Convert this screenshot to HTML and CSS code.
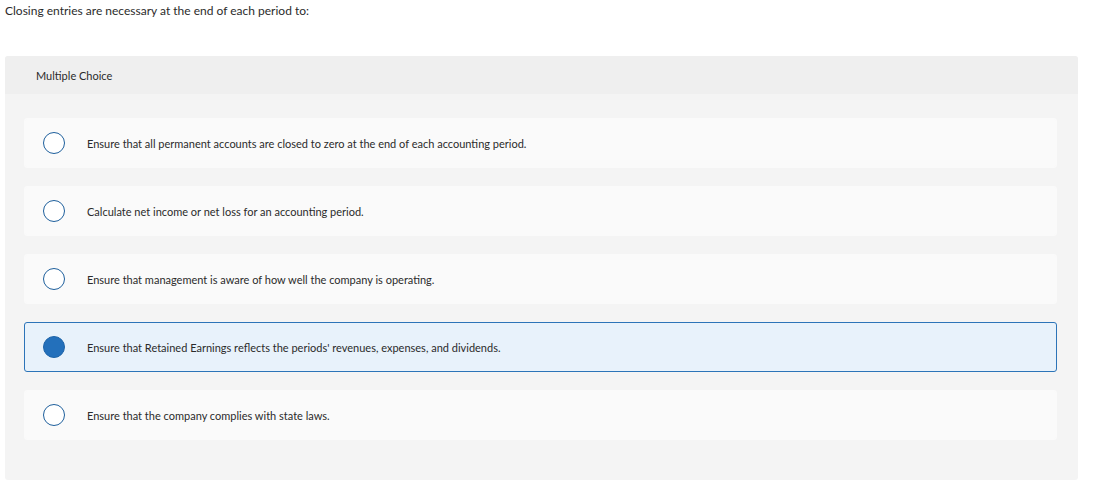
FILE: index.html
```html
<!DOCTYPE html>
<html>
<head>
<meta charset="utf-8">
<link rel="stylesheet" href="styles.css">
</head>
<body>
<p class="question">Closing entries are necessary at the end of each period to:</p>
<div class="panel">
  <div class="panel-head">Multiple Choice</div>
  <div class="panel-body">
    <div class="option"><span class="radio"></span><span class="label">Ensure that all permanent accounts are closed to zero at the end of each accounting period.</span></div>
    <div class="option"><span class="radio"></span><span class="label">Calculate net income or net loss for an accounting period.</span></div>
    <div class="option"><span class="radio"></span><span class="label">Ensure that management is aware of how well the company is operating.</span></div>
    <div class="option selected"><span class="radio"></span><span class="label">Ensure that Retained Earnings reflects the periods' revenues, expenses, and dividends.</span></div>
    <div class="option"><span class="radio"></span><span class="label">Ensure that the company complies with state laws.</span></div>
  </div>
</div>
</body>
</html>
```
FILE: styles.css
```css
html, body {
  margin: 0;
  background: #ffffff;
}
body {
  font-family: Lato, "Liberation Sans", sans-serif;
  color: #2b2b2b;
  width: 1100px;
}
.question {
  margin: 0;
  padding: 4px 5px 0;
  font-size: 12px;
  line-height: 14px;
}
.panel {
  margin: 38px 22px 0 5px;
  background: #f4f4f4;
  border-radius: 3px;
  overflow: hidden;
}
.panel-head {
  height: 38px;
  display: flex;
  align-items: center;
  padding-left: 31px;
  background: #efefef;
  font-size: 11px;
}
.panel-body {
  display: flex;
  flex-direction: column;
  gap: 18px;
  padding: 24px 21px 40px 19px;
}
.option {
  height: 50px;
  box-sizing: border-box;
  display: flex;
  align-items: center;
  padding-left: 19px;
  background: #fafafa;
  border: 1px solid #fafafa;
  border-radius: 3px;
  font-size: 11px;
}
.option.selected {
  background: #e8f2fb;
  border-color: #2c74b8;
}
.radio {
  width: 22px;
  height: 22px;
  box-sizing: border-box;
  border: 1.5px solid #1e5f9c;
  border-radius: 50%;
  background: #ffffff;
  flex: none;
  margin-left: -1px;
}
.selected .radio {
  background: #2370bb;
  border-color: #1e64a8;
}
.label {
  margin-left: 22px;
}
```
